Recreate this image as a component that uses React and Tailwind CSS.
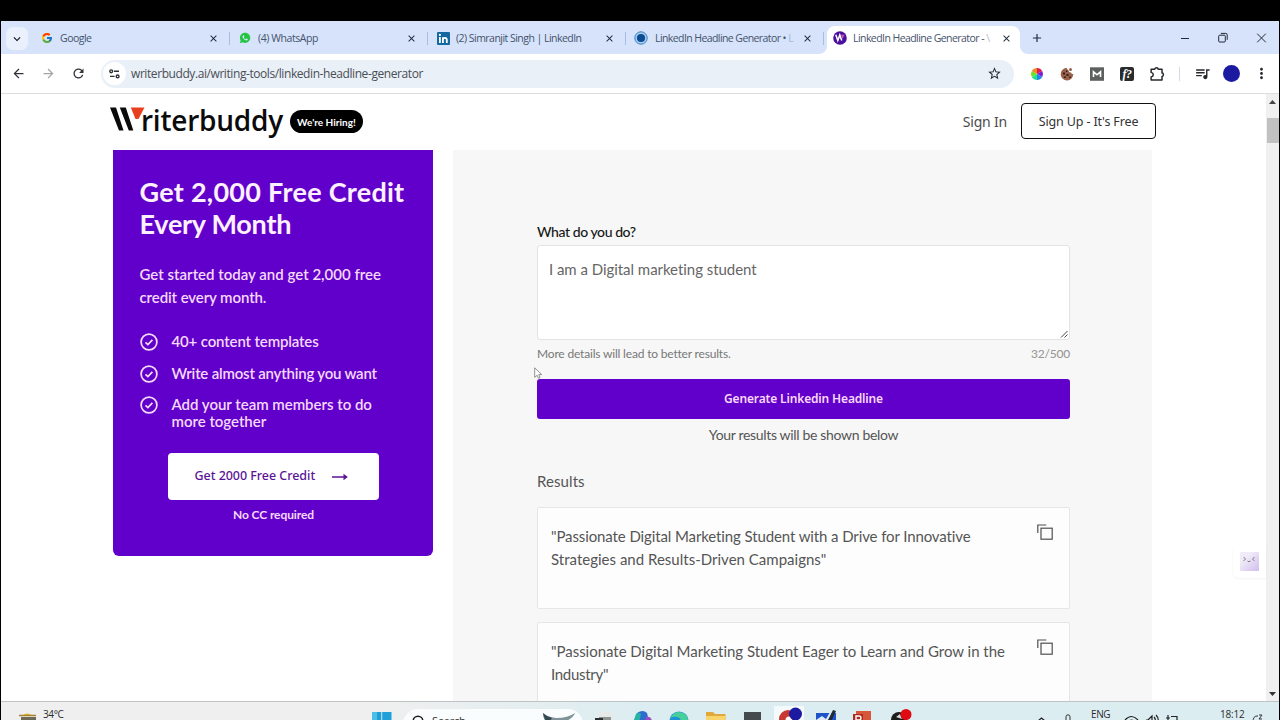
import React from "react";
import { FcGoogle } from "react-icons/fc";
import {
  MdArrowBack,
  MdArrowForward,
  MdRefresh,
  MdStarBorder,
  MdQueueMusic,
  MdMoreVert,
  MdClose,
  MdAdd,
  MdKeyboardArrowDown,
} from "react-icons/md";
import { IoLogoWhatsapp } from "react-icons/io";

function Tab({ icon, title, width, active }) {
  return (
    <div
      className={
        active
          ? "relative flex h-[28px] w-[193px] items-center rounded-t-[8px] bg-white pb-[4px] pl-[6px]"
          : "flex h-[28px] w-[198px] items-center pl-[8px]"
      }
    >
      {active && (
        <>
          <svg className="absolute -left-2 bottom-0" width="8" height="8">
            <path d="M8 0v8H0a8 8 0 0 0 8-8" fill="#fff" />
          </svg>
          <svg className="absolute -right-2 bottom-0" width="8" height="8">
            <path d="M0 0v8h8a8 8 0 0 1-8-8" fill="#fff" />
          </svg>
        </>
      )}
      <div className="flex w-[14px] shrink-0 justify-center">{icon}</div>
      <div
        className={
          "ml-[6px] shrink-0 overflow-hidden whitespace-nowrap font-['Open_Sans',sans-serif] text-[10.5px] leading-4 text-[#45536b] " +
          width
        }
      >
        {title}
      </div>
      <MdClose className="shrink-0 text-[11px] text-[#1f2a3c]" />
      {!active && <div className="ml-[10px] h-[13px] w-px shrink-0 bg-[#a9bbe0]" />}
    </div>
  );
}

function TabStrip() {
  return (
    <div className="flex h-[33px] shrink-0 items-end bg-[#d6e3fb]">
      <div className="mb-1 ml-[5px] flex h-[23px] w-[22px] items-center justify-center rounded-[7px] bg-[#eaf1fd]">
        <MdKeyboardArrowDown className="text-[14px] text-[#111]" />
      </div>
      <div className="ml-[4px] mb-[2px] flex">
        <Tab
          icon={<FcGoogle className="text-[12px]" />}
          title={<span className="tracking-[-0.5px]">Google</span>}
          width="w-[147.500px]"
        />
        <Tab
          icon={<IoLogoWhatsapp className="text-[12px] text-[#25c544]" />}
          title={<span className="tracking-[-0.42px]">(4) WhatsApp</span>}
          width="w-[147.500px]"
        />
        <Tab
          icon={
            <svg width="13" height="13" viewBox="0 0 13 13">
              <rect width="13" height="13" rx="1" fill="#14679f" />
              <rect x="2" y="5" width="1.8" height="6" fill="#fff" />
              <circle cx="2.9" cy="2.9" r="1.1" fill="#fff" />
              <path d="M5.9 11V5.2M5.9 8q0-2.1 2-2.1 1.9 0 1.9 2.1v3" fill="none" stroke="#fff" strokeWidth="1.8" />
            </svg>
          }
          title={<span className="tracking-[-0.53px]">(2) Simranjit Singh | LinkedIn</span>}
          width="w-[147.500px]"
        />
        <Tab
          icon={
            <svg width="14" height="14" viewBox="0 0 14 14">
              <circle cx="7" cy="7" r="6.2" fill="#a9cdf0" stroke="#3c7fc0" strokeWidth="1" />
              <circle cx="7" cy="7" r="4.1" fill="#0c4c94" />
            </svg>
          }
          title={
            <span className="ml-px tracking-[-0.58px]">
              LinkedIn Headline Generator • <span className="text-[#a9b8d3]">L</span>
            </span>
          }
          width="w-[147.500px]"
        />
      </div>
      <div className="ml-[3px]">
        <Tab
          active
          icon={
            <svg width="14" height="14" viewBox="0 0 14 14">
              <circle cx="7" cy="7" r="6.8" fill="#4b0f9c" />
              <path d="M2.8 3.8l2 5.8 2-5.6 1.9 5.6" fill="none" stroke="#fff" strokeWidth="1.5" />
              <path d="M8 3.8h3.6L9.4 8z" fill="#c55bb0" />
            </svg>
          }
          title={
            <span className="tracking-[-0.56px]">
              LinkedIn Headline Generator - <span className="text-[#b8bcc4]">\</span>
            </span>
          }
          width="w-[148px]"
        />
      </div>
      <MdAdd className="mb-[9px] ml-[10px] text-[14px] text-[#1f2a3c]" />
      <div className="mb-[10px] ml-auto mr-[12px] flex items-center gap-[28px]">
        <svg width="10" height="12">
          <path d="M1 6.5h8" stroke="#222b3a" />
        </svg>
        <svg width="10" height="12" viewBox="0 0 10 12" fill="none" stroke="#222b3a">
          <rect x=".7" y="3.2" width="6.6" height="6.8" rx="1" />
          <path d="M2.8 1.4h5q1.4 0 1.4 1.4v5" />
        </svg>
        <svg width="11" height="12" viewBox="0 0 11 12">
          <path d="M1.2 1.7l8.6 8.6M9.8 1.7l-8.6 8.6" stroke="#222b3a" />
        </svg>
      </div>
    </div>
  );
}

function Toolbar() {
  return (
    <div className="flex h-[40px] shrink-0 items-center border-b border-[#dfdedc] bg-white">
      <MdArrowBack className="ml-[10px] text-[15px] text-[#30343a]" />
      <MdArrowForward className="ml-[15px] text-[15px] text-[#a2a5a9]" />
      <MdRefresh className="ml-[15px] text-[15px] text-[#30343a]" />
      <div className="ml-[15px] flex h-[28px] w-[913px] items-center rounded-full bg-[#e9f0f7]">
        <div className="ml-[2px] flex h-[23px] w-[23px] items-center justify-center rounded-full bg-white">
          <svg width="11" height="10" viewBox="0 0 11 10" fill="none" stroke="#2b2f36" strokeWidth="1.4">
            <circle cx="2.2" cy="2.3" r="1.4" />
            <path d="M5 2.3h5M1 7.4h4.5" />
            <circle cx="8.6" cy="7.4" r="1.4" />
          </svg>
        </div>
        <div className="ml-[5px] whitespace-nowrap pt-px font-['Open_Sans',sans-serif] text-[12px] leading-4 tracking-[-0.42px] text-[#4a4e55]">
          writerbuddy.ai/writing-tools/linkedin-headline-generator
        </div>
        <MdStarBorder className="ml-auto mr-[12px] text-[15px] text-[#22262c]" />
      </div>
      <svg className="ml-[16px]" width="14" height="14" viewBox="0 0 14 14">
        <path d="M7 7V1a6 6 0 0 1 5.2 3z" fill="#e31b4c" />
        <path d="M7 7l5.2-3a6 6 0 0 1 0 6z" fill="#7a1fd0" />
        <path d="M7 7l5.2 3A6 6 0 0 1 7 13z" fill="#2183f3" />
        <path d="M7 7v6a6 6 0 0 1-5.2-3z" fill="#20e08b" />
        <path d="M7 7l-5.2 3a6 6 0 0 1 0-6z" fill="#6be31e" />
        <path d="M7 7L1.8 4A6 6 0 0 1 7 1z" fill="#ef8a26" />
      </svg>
      <svg className="ml-4" width="14" height="14" viewBox="0 0 14 14">
        <path d="M6.5.8A6.3 6.3 0 1 0 13.3 7q-1.8.2-2.3-1.6Q8.600 5.700 8.500 3.200 6.800 2.800 6.500.8" fill="#96604a" />
        <circle cx="10.5" cy="2.500" r="1.500" fill="#96604a" />
        <path d="M3 5.500h2v2H3zM6.500 7h2v2h-2zM4 9.500h1.800v1.600H4zM9.200 9.600h1.600v1.500H9.200zM6 3.500h1.400v1.500H6z" fill="#3b1d17" />
      </svg>
      <svg className="ml-4" width="14" height="14" viewBox="0 0 14 14">
        <rect width="14" height="13.500" y=".3" fill="#5c6160" />
        <path d="M3.500 10V4.800L7 7.800l3.500-3V10" fill="none" stroke="#fff" strokeWidth="1.600" />
      </svg>
      <div className="ml-4 flex h-[14px] w-[14px] items-center justify-center rounded-[2px] bg-[#292b2d] font-['Liberation_Serif',serif] text-[12px] font-bold italic leading-none tracking-[-0.5px] text-white">
        f?
      </div>
      <svg className="ml-[15px]" width="16" height="16" viewBox="0 0 15 15" fill="none" stroke="#25292e" strokeWidth="1.400" strokeLinejoin="round">
        <path d="M2 3h3.400a1.600 1.300 0 0 1 3.200 0h3.600v3.600a1.300 1.600 0 0 1 0 3.200v3.400H2V10.200q2-.5 2-2.100T2 6z" />
      </svg>
      <div className="ml-[14px] h-[14px] w-px bg-[#d5dbe3]" />
      <MdQueueMusic className="ml-[14px] text-[17px] text-[#25292e]" />
      <div className="ml-[12px] h-[17px] w-[17px] rounded-full bg-[#1c1aa0]" />
      <MdMoreVert className="ml-[13px] text-[17px] text-[#25292e]" />
    </div>
  );
}

function SiteHeader() {
  return (
    <header className="flex h-[56px] shrink-0 items-center pl-[109px]">
      <svg className="-mr-px mb-[5px]" width="35" height="25" viewBox="0 0 35 25">
        <path d="M0 .5h6l7.500 23H9zM9.800.5h6l7.500 23H18.800z" fill="#0b0b0b" />
        <path d="M20.800.6H34.500l-6 11.400h-3z" fill="#e8401f" />
      </svg>
      <div className="-ml-[3px] mb-[4px] whitespace-nowrap font-['Open_Sans',sans-serif] text-[28px] font-semibold leading-[38px] tracking-[-0.23px] text-[#0b0b0b]">
        riterbuddy
      </div>
      <div className="mb-px ml-[7px] flex h-[23px] w-[73px] items-center justify-center whitespace-nowrap rounded-full bg-black font-['Lato',sans-serif] text-[10px] font-bold leading-none text-white">
        We're Hiring!
      </div>
      <div className="ml-auto whitespace-nowrap font-['Noto_Sans',sans-serif] text-[14px] leading-5 tracking-[-0.2px] text-[#4c4c4c]">
        Sign In
      </div>
      <button className="mb-[2px] ml-[14px] mr-[110px] h-[36px] w-[135px] whitespace-nowrap rounded-[4px] border border-[#111] bg-white pt-[2px] font-['Noto_Sans',sans-serif] text-[12.500px] leading-none tracking-[-0.14px] text-[#333]">
        Sign Up - It's Free
      </button>
    </header>
  );
}

function Feature({ children }) {
  return (
    <li className="flex">
      <svg className="shrink-0" width="18" height="18" viewBox="0 0 18 18" fill="none" stroke="#f6dcfb" strokeWidth="1.700">
        <circle cx="9" cy="9" r="7.900" />
        <path d="M5.500 9.300l2.400 2.300 4.500-4.700" />
      </svg>
      <div className="ml-[14px] whitespace-nowrap">{children}</div>
    </li>
  );
}

function PromoCard() {
  return (
    <aside className="ml-[112px] flex h-[406px] w-[320px] shrink-0 flex-col rounded-b-[6px] bg-[#6200cb] pl-[26.500px] pt-[26px] font-['Lato',sans-serif] text-[15px] font-semibold text-[#f5d9fb]">
      <h2 className="whitespace-nowrap text-[27px] font-bold leading-8 text-[#fdf0ff]">
        <span className="tracking-[0.270px]">Get 2,000 Free Credit</span>
        <br />
        <span className="tracking-[-0.250px]">Every Month</span>
      </h2>
      <p className="mt-[22.500px] whitespace-nowrap leading-[23.500px] tracking-[0.010px]">
        Get started today and get 2,000 free
        <br />
        <span className="tracking-[-0.100px]">credit every month.</span>
      </p>
      <ul className="mt-[23.500px] flex flex-col gap-[13.500px] leading-[17px]">
        <Feature><span className="tracking-[-0.140px]">40+ content templates</span></Feature>
        <Feature><span className="tracking-[-0.200px]">Write almost anything you want</span></Feature>
        <Feature>
          <span className="tracking-[-0.020px]">
            Add your team members to do
            <br />
            more together
          </span>
        </Feature>
      </ul>
      <button className="ml-[28px] mt-[22.500px] flex h-[47px] w-[211px] shrink-0 items-center rounded-[4px] bg-white pl-[27px] pt-px font-['Noto_Sans',sans-serif] text-[12.500px] font-medium tracking-[-0.04px] text-[#5a1296]">
        Get 2000 Free Credit
        <svg className="ml-[17px]" width="16" height="8" viewBox="0 0 16 8">
          <path d="M0 4h13" stroke="#5a1296" strokeWidth="1.500" />
          <path d="M11.500 .8L15.800 4l-4.300 3.200z" fill="#5a1296" />
        </svg>
      </button>
      <div className="mt-[7.500px] w-[268px] text-center text-[12px] font-bold leading-4 tracking-[-0.1px]">
        No CC required
      </div>
    </aside>
  );
}

function ResultCard({ children }) {
  return (
    <div className="flex h-[102px] shrink-0 justify-between rounded-[2px] border border-[#e6e6e6] bg-[#fdfdfd] pl-[13px] pr-4 pt-[16.500px] text-[15px] leading-[23px]">
      <div className="whitespace-nowrap">{children}</div>
      <svg className="-mt-[1px]" width="16" height="16" viewBox="0 0 16 16" fill="none" stroke="#4f4f4f" strokeWidth="1.200">
        <path d="M.8 9V1h8.500" />
        <rect x="4" y="4.200" width="11.200" height="11" />
      </svg>
    </div>
  );
}

function GeneratorPanel() {
  return (
    <main className="ml-[20px] w-[699px] shrink-0 bg-[#f7f7f7] pl-[84px] pt-[72px] font-['Lato',sans-serif] text-[#555]">
      <div className="flex w-[533px] flex-col">
        <div className="text-[14px] font-medium leading-5 tracking-[-0.42px] text-[#161616]">What do you do?</div>
        <div className="relative mt-[3px] h-[95px] rounded-[3px] border border-[#e3e3e3] bg-white pl-[11px] pt-[13px] text-[15px] leading-5 tracking-[-0.040px] text-[#666]">
          I am a Digital marketing student
          <svg className="absolute bottom-[1px] right-[1px]" width="8" height="8" stroke="#444" strokeWidth="1">
            <path d="M1 7.500L7.500 1M4.500 7.500l3-3" />
          </svg>
        </div>
        <div className="mt-[6px] flex justify-between text-[12px] leading-4">
          <span className="tracking-[-0.18px] text-[#777]">More details will lead to better results.</span>
          <span className="font-medium tracking-[-0.2px] text-[#999]">32/500</span>
        </div>
        <button className="mt-[17px] h-[39.500px] rounded-[3px] bg-[#6200cb] font-['Noto_Sans',sans-serif] text-[12px] font-semibold leading-none tracking-[-0.15px] text-[#f8d9fb]">
          Generate Linkedin Headline
        </button>
        <div className="mt-[6px] text-center text-[14px] leading-5 tracking-[-0.33px]">
          Your results will be shown below
        </div>
        <div className="mb-[16.500px] mt-[26px] text-[15px] leading-5 tracking-[0.080px]">Results</div>
        <div className="flex flex-col gap-[13px]">
          <ResultCard>
            <span className="tracking-[-0.110px]">"Passionate Digital Marketing Student with a Drive for Innovative</span>
            <br />
            <span className="tracking-[0.010px]">Strategies and Results-Driven Campaigns"</span>
          </ResultCard>
          <ResultCard>
            <span className="tracking-[-0.030px]">"Passionate Digital Marketing Student Eager to Learn and Grow in the</span>
            <br />
            <span className="tracking-[-0.300px]">Industry"</span>
          </ResultCard>
        </div>
      </div>
    </main>
  );
}

function Taskbar() {
  return (
    <div className="flex h-[19px] shrink-0 items-start overflow-hidden whitespace-nowrap border-t border-[#bfc3c4] bg-linear-to-r from-[#efefef] from-30% to-[#dcedf1] to-50% font-['Open_Sans',sans-serif] text-[10px] leading-3 text-[#2c2c2c]">
      <svg className="ml-[18px] mt-[10px]" width="18" height="12">
        <path d="M3 4q5-5 11 0z" fill="#e8b323" />
        <path d="M0 3.500h17M2 6.500h15" stroke="#a5832c" strokeWidth="1.500" />
        <path d="M2 5h15v7H2z" fill="#6e6a58" />
      </svg>
      <div className="ml-[6px] mt-[6px] w-[22px] tracking-[-0.400px]">34°C</div>
      <svg className="ml-[307px] mt-[10px]" width="20" height="18">
        <path d="M0 0h9.300v9H0zM10.200 0h9.300v9h-9.300z" fill="#1fa0d8" />
        <path d="M0 0h5v9H0z" fill="#4cbfe8" />
      </svg>
      <div className="ml-[11px] mt-[7px] flex h-[30px] w-[180px] rounded-full bg-[#fafdfd]">
        <svg className="ml-[9px] mt-[6px]" width="14" height="14" fill="none" stroke="#222" strokeWidth="1.500">
          <circle cx="6" cy="6" r="4.800" />
        </svg>
        <span className="ml-[6px] mt-[6px] w-[34px] text-[11px] tracking-[-0.200px]">Search</span>
        <svg className="ml-auto mr-[6px] mt-[4px]" width="34" height="14">
          <path d="M0 0q4 4 13 5Q25 5 32 0q-3 8-17 10H4Q0 6 0 0" fill="#7f9399" />
          <path d="M0 0q4 4 9 5l-4 6Q1 6 0 0" fill="#344a52" />
        </svg>
      </div>
      <svg className="ml-[12px] mt-[10px]" width="20" height="14">
        <path d="M4 0h14v10H4z" fill="#e7e8e8" />
        <path d="M4 5h12v9H4z" fill="#8d9494" />
        <path d="M0 6h8v8H0z" fill="#2d2f30" />
      </svg>
      <svg className="ml-[17px] mt-[9px]" width="21" height="20">
        <path d="M5 2q6-4 10 0l3 12H0z" fill="#2a6fce" />
        <path d="M4 3q3-2 5 0L6 16H0z" fill="#25b5a2" />
        <path d="M14 6q5-1 6 4l1 6h-9z" fill="#a04bc6" />
      </svg>
      <svg className="ml-[16px] mt-[9px]" width="20" height="20">
        <circle cx="10" cy="10" r="9.500" fill="#1f8fd6" />
        <path d="M1 8Q5-1 13 1.500 20 4 19 12h-8q2-5-3-6T1 8" fill="#45cf9b" />
      </svg>
      <svg className="ml-[17px] mt-[10px]" width="20" height="14">
        <path d="M0 0h7l2 2h10.500v12H0z" fill="#e0a93a" />
        <path d="M0 4h19.500v10H0z" fill="#f8d56c" />
      </svg>
      <div className="ml-[18px] mt-[10px] h-[12px] w-[17px] bg-[#444a4e]" />
      <div className="ml-[13px] mt-[4px] h-4 w-[30px] bg-[#f4fafb]">
        <svg width="30" height="16">
          <circle cx="14" cy="13" r="9" fill="#c93733" />
          <circle cx="15" cy="14" r="3.500" fill="#fff" />
          <circle cx="21.500" cy="8" r="6.500" fill="#1c1aa0" />
        </svg>
      </div>
      <svg className="ml-[12px] mt-[8px]" width="20" height="12">
        <path d="M0 3h20v9H0z" fill="#1b55c9" />
        <path d="M0 10l6-4 4 3 4-7 2 2-3 8z" fill="#dfe9f7" />
        <path d="M17 0l3 1-5 11h-4z" fill="#1f2d3b" />
      </svg>
      <svg className="ml-[17px] mt-[9px]" width="20" height="12">
        <path d="M3 0h15v12H3z" fill="#d8573b" />
        <path d="M0 3h10v9H0z" fill="#a92c1c" />
        <path d="M3 12V5h3q2 0 2 2t-2 2H3" fill="none" stroke="#fff" strokeWidth="1.400" />
      </svg>
      <svg className="ml-[17px] mt-[6px]" width="22" height="14">
        <circle cx="9" cy="12" r="8" fill="#1c1c1c" />
        <path d="M6 9l4-3 2 5z" fill="#d8d8d8" />
        <circle cx="16" cy="6.500" r="5.500" fill="#e00b12" />
      </svg>
      <svg className="ml-[125px] mt-[14px]" width="9" height="5" fill="none" stroke="#222" strokeWidth="1.300">
        <path d="M1 5l3.500-3L8 5" />
      </svg>
      <svg className="ml-[18px] mt-[12px]" width="8" height="8" fill="none" stroke="#333">
        <rect x="2" y=".8" width="4" height="9" rx="2" />
      </svg>
      <div className="ml-[19px] mt-[6px] w-[22px] tracking-[-0.400px]">ENG</div>
      <svg className="ml-[11px] mt-[13px]" width="15" height="6" fill="none" stroke="#222" strokeWidth="1.200">
        <path d="M1 5q6.500-7 13 0M4 7q3.500-4 7 0" />
      </svg>
      <svg className="ml-[6px] mt-[12px]" width="14" height="8" fill="none" stroke="#222" strokeWidth="1.200">
        <path d="M1 6h2l4-4v6M9 3q2 2 1 5M11 1q3 3 2 7" />
      </svg>
      <svg className="ml-[6px] mt-[12px]" width="13" height="8" fill="none" stroke="#222" strokeWidth="1.200">
        <path d="M3 1v7M1 4h4M6 2.500h6V8" />
      </svg>
      <div className="ml-[42px] mt-[6px] w-[25px] tracking-[-0.200px]">18:12</div>
      <svg className="ml-[7px] mt-[12px]" width="12" height="8" fill="none" stroke="#333">
        <path d="M1 8q0-6 4-6h1M7 1h3L7 5h3" />
      </svg>
    </div>
  );
}

export default function App() {
  return (
    <div className="relative flex h-[720px] w-[1280px] flex-col overflow-hidden bg-black px-px pt-[21px]">
      <TabStrip />
      <Toolbar />
      <div className="flex h-[607px] shrink-0 bg-white">
        <div className="flex h-full min-w-0 flex-1 flex-col overflow-hidden">
          <SiteHeader />
          <div className="flex h-[551px] overflow-hidden">
            <PromoCard />
            <GeneratorPanel />
          </div>
        </div>
        <div className="flex w-[13px] shrink-0 flex-col items-center bg-[#f0f0f0]">
          <svg className="mt-[6px]" width="7" height="4">
            <path d="M3.500 0L7 4H0z" fill="#444" />
          </svg>
          <div className="mt-[14px] h-[25px] w-[12px] bg-[#c1c1c1]" />
          <svg className="mb-[5px] mt-auto" width="7" height="4">
            <path d="M3.500 4L7 0H0z" fill="#333" />
          </svg>
        </div>
      </div>
      <Taskbar />
      <div className="absolute left-[1233px] top-[545px] flex h-[33px] w-[33px] items-center justify-center rounded-l-[6px] bg-white shadow-[0_1px_3px_rgba(0,0,0,0.05)]">
        <svg width="19" height="19" viewBox="0 0 19 19">
          <defs>
            <linearGradient id="face" x1="0" y1="0" x2="1" y2="1">
              <stop offset="0.300" stopColor="#f0ebf8" />
              <stop offset="1" stopColor="#d0bdec" />
            </linearGradient>
          </defs>
          <rect width="19" height="19" rx="1" fill="url(#face)" />
          <path d="M3.500 5l2 2-2 2M14.500 5l-2 2 2 2M7.500 9q1.500 1.500 3 0" fill="none" stroke="#82788f" />
        </svg>
      </div>
      <svg className="absolute left-[534px] top-[367px]" width="9" height="12" viewBox="0 0 9 12">
        <path d="M.7.800v9.500l2.400-2 1.500 3 1.500-.7-1.400-3h3z" fill="#fff" stroke="#777" strokeWidth=".8" />
      </svg>
    </div>
  );
}
